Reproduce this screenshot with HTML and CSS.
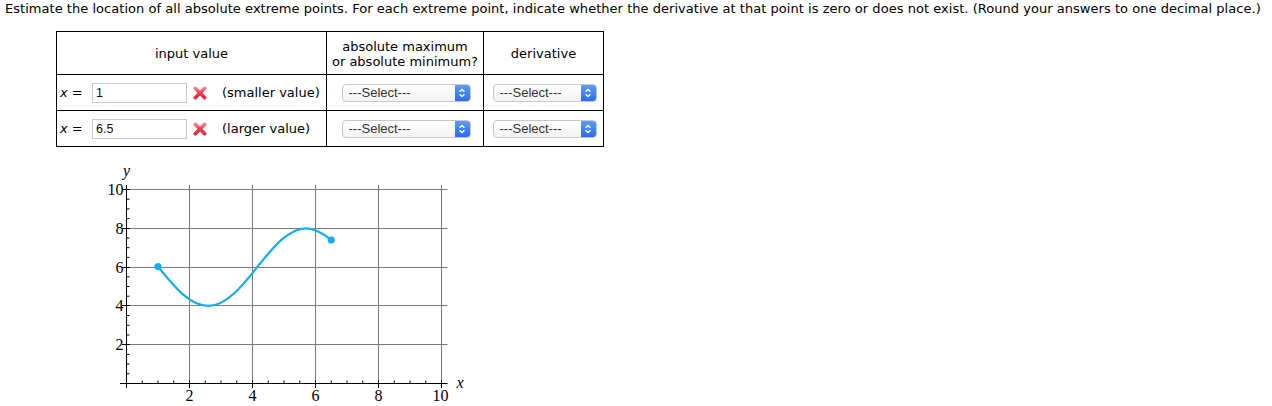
FILE: index.html
```html
<!DOCTYPE html>
<html>
<head>
<meta charset="utf-8">
<title>Absolute extreme points</title>
<link rel="stylesheet" href="styles.css">
</head>
<body>
<p class="prompt">Estimate the location of all absolute extreme points. For each extreme point, indicate whether the derivative at that point is zero or does not exist. (Round your answers to one decimal place.)</p>

<svg width="0" height="0" class="defs">
  <defs>
    <linearGradient id="xgrad" x1="0" y1="0" x2="0" y2="1">
      <stop offset="0" stop-color="#ff7f8c"/>
      <stop offset="0.5" stop-color="#ec3b4e"/>
      <stop offset="1" stop-color="#e02b40"/>
    </linearGradient>
  </defs>
</svg>

<div class="answers">
  <div class="cell head">input value</div>
  <div class="cell head">absolute maximum<br>or absolute minimum?</div>
  <div class="cell head">derivative</div>

  <div class="cell inp">
    <span class="xeq"><i>x</i> =</span>
    <span class="field">1</span>
    <svg class="wrong" width="14" height="14" viewBox="0 0 14 14"><path d="M2.3 2.3 L11.7 11.7 M11.7 2.3 L2.3 11.7" stroke="url(#xgrad)" stroke-width="3.6" stroke-linecap="round"/></svg>
    <span class="note">(smaller value)</span>
  </div>
  <div class="cell selcell">
    <div class="sel sel-a"><span class="sel-text">---Select---</span><span class="sel-btn"><svg width="8" height="12" viewBox="0 0 8 12"><path d="M1.6 4.8 L4 2.4 L6.4 4.8 M1.6 7.2 L4 9.6 L6.4 7.2" fill="none" stroke="#fff" stroke-width="1.4"/></svg></span></div>
  </div>
  <div class="cell selcell">
    <div class="sel sel-b"><span class="sel-text">---Select---</span><span class="sel-btn"><svg width="8" height="12" viewBox="0 0 8 12"><path d="M1.6 4.8 L4 2.4 L6.4 4.8 M1.6 7.2 L4 9.6 L6.4 7.2" fill="none" stroke="#fff" stroke-width="1.4"/></svg></span></div>
  </div>

  <div class="cell inp">
    <span class="xeq"><i>x</i> =</span>
    <span class="field">6.5</span>
    <svg class="wrong" width="14" height="14" viewBox="0 0 14 14"><path d="M2.3 2.3 L11.7 11.7 M11.7 2.3 L2.3 11.7" stroke="url(#xgrad)" stroke-width="3.6" stroke-linecap="round"/></svg>
    <span class="note">(larger value)</span>
  </div>
  <div class="cell selcell">
    <div class="sel sel-a"><span class="sel-text">---Select---</span><span class="sel-btn"><svg width="8" height="12" viewBox="0 0 8 12"><path d="M1.6 4.8 L4 2.4 L6.4 4.8 M1.6 7.2 L4 9.6 L6.4 7.2" fill="none" stroke="#fff" stroke-width="1.4"/></svg></span></div>
  </div>
  <div class="cell selcell">
    <div class="sel sel-b"><span class="sel-text">---Select---</span><span class="sel-btn"><svg width="8" height="12" viewBox="0 0 8 12"><path d="M1.6 4.8 L4 2.4 L6.4 4.8 M1.6 7.2 L4 9.6 L6.4 7.2" fill="none" stroke="#fff" stroke-width="1.4"/></svg></span></div>
  </div>
</div>

<svg class="graph" width="380" height="246" viewBox="0 0 380 246">
  <g stroke="#7a7a7a" stroke-width="1">
    <line x1="89.5" y1="25" x2="89.5" y2="223.5"/>
    <line x1="152.5" y1="25" x2="152.5" y2="223.5"/>
    <line x1="215.5" y1="25" x2="215.5" y2="223.5"/>
    <line x1="278.5" y1="25" x2="278.5" y2="223.5"/>
    <line x1="341.5" y1="25" x2="341.5" y2="223.5"/>
    <line x1="26.5" y1="29.5" x2="347.5" y2="29.5"/>
    <line x1="26.5" y1="68.5" x2="347.5" y2="68.5"/>
    <line x1="26.5" y1="107.5" x2="347.5" y2="107.5"/>
    <line x1="26.5" y1="145.5" x2="347.5" y2="145.5"/>
    <line x1="26.5" y1="184.5" x2="347.5" y2="184.5"/>
  </g>
  <g stroke="#000" stroke-width="1" fill="none">
    <line x1="20" y1="223.5" x2="347.5" y2="223.5"/>
    <line x1="26.5" y1="25" x2="26.5" y2="228"/>
    <path d="M22 29.5h8M22 68.5h8M22 107.5h8M22 145.5h8M22 184.5h8"/>
    <path d="M26.5 213.8h3M26.5 204.1h3M26.5 194.4h3M26.5 175h3M26.5 165.3h3M26.5 155.6h3M26.5 136.2h3M26.5 126.5h3M26.5 116.8h3M26.5 97.4h3M26.5 87.7h3M26.5 78h3M26.5 58.6h3M26.5 48.9h3M26.5 39.2h3"/>
    <path d="M89.5 220v8M152.5 220v8M215.5 220v8M278.5 220v8M341.5 220v8"/>
    <path d="M42.25 220.5v3M58 220.5v3M73.75 220.5v3M105.25 220.5v3M121 220.5v3M136.75 220.5v3M168.25 220.5v3M184 220.5v3M199.75 220.5v3M231.25 220.5v3M247 220.5v3M262.75 220.5v3M294.25 220.5v3M310 220.5v3M325.75 220.5v3"/>
  </g>
  <g class="ylabels">
    <text x="23.5" y="34.5">10</text>
    <text x="23.5" y="73.5">8</text>
    <text x="23.5" y="112.5">6</text>
    <text x="23.5" y="150.5">4</text>
    <text x="23.5" y="189.5">2</text>
  </g>
  <g class="xlabels">
    <text x="89.5" y="240.5">2</text>
    <text x="152.5" y="240.5">4</text>
    <text x="215.5" y="240.5">6</text>
    <text x="278.5" y="240.5">8</text>
    <text x="340.5" y="240.5">10</text>
  </g>
  <text class="axlabel" x="360" y="228">x</text>
  <text class="axlabel" x="26.5" y="15.5">y</text>
  <path d="M58 106.6 C74.8 127.1 89.5 145.9 108.4 145.9 C144 145.9 170.5 68.3 206 68.3 C214.5 68.3 222.8 72.9 231.25 80" fill="none" stroke="#15aef0" stroke-width="2.2"/>
  <circle cx="58" cy="106.6" r="3.6" fill="#15aef0"/>
  <circle cx="231.25" cy="80" r="3.6" fill="#15aef0"/>
</svg>
</body>
</html>
```

FILE: styles.css
```css
body {
  margin: 0;
  padding: 0 5px;
  font-family: "DejaVu Sans", Verdana, sans-serif;
  color: #000;
  background: #fff;
}

.prompt {
  margin: 0;
  font-size: 13px;
  line-height: 17px;
  letter-spacing: 0.035px;
  white-space: nowrap;
}

.defs {
  position: absolute;
  width: 0;
  height: 0;
}

.answers {
  display: grid;
  grid-template-columns: 270px 157px 120px;
  grid-template-rows: 43px 36px 36px;
  width: max-content;
  margin: 14px 0 0 51px;
  border-left: 1px solid #000;
  border-top: 1px solid #000;
  font-size: 13px;
}

.cell {
  box-sizing: border-box;
  border-right: 1px solid #000;
  border-bottom: 1px solid #000;
}

.head {
  display: flex;
  align-items: center;
  justify-content: center;
  text-align: center;
  line-height: 15px;
  padding-top: 1px;
}

.inp {
  display: flex;
  align-items: center;
  padding-left: 3px;
}

.xeq {
  width: 32px;
  white-space: nowrap;
}

.field {
  box-sizing: border-box;
  width: 95px;
  height: 20px;
  border: 1px solid #c9c9c9;
  padding-left: 3px;
  font-family: "Liberation Sans", Arial, sans-serif;
  font-size: 12.5px;
  line-height: 18px;
  color: #111;
}

.wrong {
  margin-left: 6px;
  flex: none;
}

.note {
  margin-left: 15px;
  white-space: nowrap;
}

.selcell {
  display: flex;
  align-items: center;
  justify-content: center;
}

.sel {
  display: flex;
  box-sizing: border-box;
  height: 18px;
  border: 1px solid #c8c8c8;
  border-radius: 4px;
  background: linear-gradient(#ffffff, #f3f3f3);
  overflow: hidden;
}

.sel-a {
  width: 129px;
  margin-left: 2px;
}

.sel-b {
  width: 104px;
  margin-left: 2px;
}

.sel-text {
  flex: 1;
  padding-left: 6px;
  font-family: "Liberation Sans", Arial, sans-serif;
  font-size: 13px;
  line-height: 16px;
  color: #333;
  white-space: nowrap;
}

.sel-btn {
  width: 15px;
  flex: none;
  display: flex;
  align-items: center;
  justify-content: center;
  background: linear-gradient(#5d9cf9, #2a6cf0);
}

.graph {
  display: block;
  margin: 13px 0 0 95px;
}

.ylabels text,
.xlabels text {
  font-family: "Liberation Serif", "Times New Roman", serif;
  font-size: 16px;
}

.ylabels text {
  text-anchor: end;
}

.xlabels text {
  text-anchor: middle;
}

.axlabel {
  font-family: "Liberation Serif", "Times New Roman", serif;
  font-style: italic;
  font-size: 16px;
  text-anchor: middle;
}
```
